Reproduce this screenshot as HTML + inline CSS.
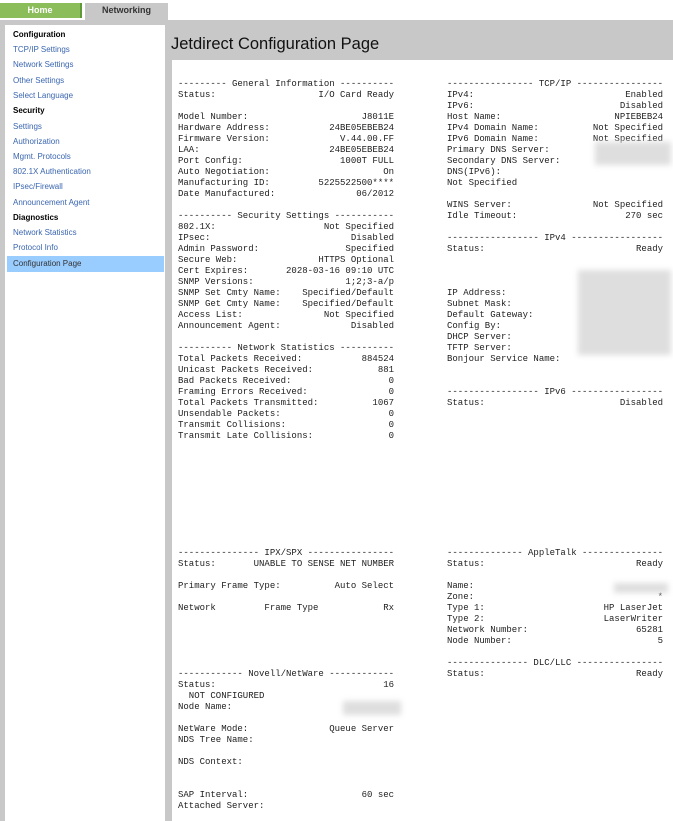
<!DOCTYPE html>
<html><head><meta charset="utf-8"><style>
*{margin:0;padding:0;box-sizing:border-box}
html,body{width:673px;height:821px;overflow:hidden}
body{background:#c8c8c8;position:relative;font-family:"Liberation Sans",Arial,sans-serif}
#top{position:absolute;left:0;top:0;width:673px;height:20px;background:#fff}
#home{position:absolute;left:0;top:3px;width:82px;height:15px;background:#8bbd5a;border-right:2px solid #5e9a36;color:#fff;font-weight:bold;font-size:9px;text-align:center;line-height:15px}
#net{position:absolute;left:85px;top:3px;width:83px;height:17px;background:#c8c8c8;color:#333;font-weight:bold;font-size:9px;text-align:center;line-height:15px}
#side{position:absolute;left:5px;top:25px;width:160px;height:796px;background:#fff}
.it{position:absolute;left:8px;font-size:8px;color:#3a66b0;line-height:10px}
.h{color:#000;font-weight:bold}
#sel{position:absolute;left:2px;top:231px;width:157px;height:16px;background:#99ccff}
#title{position:absolute;left:171px;top:35px;font-size:16.5px;color:#111}
#panel{position:absolute;left:172px;top:60px;width:501px;height:761px;background:#fff;overflow:hidden}
pre{position:absolute;font-family:"Liberation Mono",monospace;font-size:9px;line-height:11px;color:#222;white-space:pre}
.b{position:absolute;background:#dedede;filter:blur(3px)}
</style></head><body>
<div id="top"></div>
<div id="home">Home</div>
<div id="net">Networking</div>
<div id="side">
<div id="sel"></div>
<div class="it h" style="top:5px">Configuration</div>
<div class="it" style="top:20px">TCP/IP Settings</div>
<div class="it" style="top:35px">Network Settings</div>
<div class="it" style="top:51px">Other Settings</div>
<div class="it" style="top:66px">Select Language</div>
<div class="it h" style="top:81px">Security</div>
<div class="it" style="top:97px">Settings</div>
<div class="it" style="top:112px">Authorization</div>
<div class="it" style="top:127px">Mgmt. Protocols</div>
<div class="it" style="top:142px">802.1X Authentication</div>
<div class="it" style="top:157px">IPsec/Firewall</div>
<div class="it" style="top:173px">Announcement Agent</div>
<div class="it h" style="top:188px">Diagnostics</div>
<div class="it" style="top:203px">Network Statistics</div>
<div class="it" style="top:218px">Protocol Info</div>
<div class="it" style="top:234px;color:#333">Configuration Page</div>
</div>
<div id="title">Jetdirect Configuration Page</div>
<div id="panel">
<pre style="left:6px;top:19px">--------- General Information ----------
Status:                   I/O Card Ready

Model Number:                     J8011E
Hardware Address:           24BE05EBEB24
Firmware Version:             V.44.00.FF
LAA:                        24BE05EBEB24
Port Config:                  1000T FULL
Auto Negotiation:                     On
Manufacturing ID:         5225522500****
Date Manufactured:               06/2012

---------- Security Settings -----------
802.1X:                    Not Specified
IPsec:                          Disabled
Admin Password:                Specified
Secure Web:               HTTPS Optional
Cert Expires:       2028-03-16 09:10 UTC
SNMP Versions:                 1;2;3-a/p
SNMP Set Cmty Name:    Specified/Default
SNMP Get Cmty Name:    Specified/Default
Access List:               Not Specified
Announcement Agent:             Disabled

---------- Network Statistics ----------
Total Packets Received:           884524
Unicast Packets Received:            881
Bad Packets Received:                  0
Framing Errors Received:               0
Total Packets Transmitted:          1067
Unsendable Packets:                    0
Transmit Collisions:                   0
Transmit Late Collisions:              0</pre>
<pre style="left:275px;top:19px">---------------- TCP/IP ----------------
IPv4:                            Enabled
IPv6:                           Disabled
Host Name:                     NPIEBEB24
IPv4 Domain Name:          Not Specified
IPv6 Domain Name:          Not Specified
Primary DNS Server:
Secondary DNS Server:
DNS(IPv6):
Not Specified

WINS Server:               Not Specified
Idle Timeout:                    270 sec

----------------- IPv4 -----------------
Status:                            Ready



IP Address:
Subnet Mask:
Default Gateway:
Config By:
DHCP Server:
TFTP Server:
Bonjour Service Name:


----------------- IPv6 -----------------
Status:                         Disabled</pre>
<pre style="left:6px;top:488px">--------------- IPX/SPX ----------------
Status:       UNABLE TO SENSE NET NUMBER

Primary Frame Type:          Auto Select

Network         Frame Type            Rx





------------ Novell/NetWare ------------
Status:                               16
  NOT CONFIGURED
Node Name:

NetWare Mode:               Queue Server
NDS Tree Name:

NDS Context:


SAP Interval:                     60 sec
Attached Server:</pre>
<pre style="left:275px;top:488px">-------------- AppleTalk ---------------
Status:                            Ready

Name:
Zone:                                  *
Type 1:                      HP LaserJet
Type 2:                      LaserWriter
Network Number:                    65281
Node Number:                           5

--------------- DLC/LLC ----------------
Status:                            Ready</pre>
</div>
<div class="b" style="left:595px;top:142px;width:76px;height:23px"></div>
<div class="b" style="left:578px;top:270px;width:93px;height:85px"></div>
<div class="b" style="left:614px;top:583px;width:54px;height:10px"></div>
<div class="b" style="left:343px;top:701px;width:58px;height:14px"></div>
</body></html>
